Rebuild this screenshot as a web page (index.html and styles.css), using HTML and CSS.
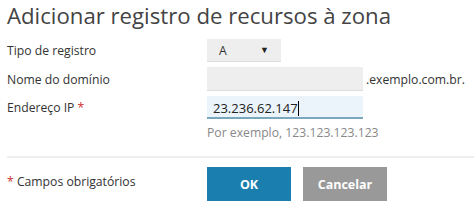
FILE: index.html
```html
<!DOCTYPE html>
<html lang="pt-BR">
<head>
    <meta charset="UTF-8">
    <title>Adicionar registro de recursos</title>
    <link rel="stylesheet" href="styles.css">
</head>
<body>
    <h1>Adicionar registro de recursos à zona</h1>
    <div class="form">
        <div class="row">
            <label class="label">Tipo de registro</label>
            <div class="select">A <span class="caret">▼</span></div>
        </div>
        <div class="row">
            <label class="label">Nome do domínio</label>
            <div class="field">
                <div class="input"></div>
                <span class="suffix">.exemplo.com.br.</span>
            </div>
        </div>
        <div class="row">
            <label class="label">Endereço IP <span class="req">*</span></label>
            <div class="input focus">23.236.62.147<span class="cursor"></span></div>
        </div>
        <div class="hint">Por exemplo, 123.123.123.123</div>
    </div>
    <div class="footer">
        <div class="label"><span class="req">*</span> Campos obrigatórios</div>
        <div class="buttons">
            <button class="btn primary">OK</button>
            <button class="btn">Cancelar</button>
        </div>
    </div>
</body>
</html>
```
FILE: styles.css
```css
body {
    margin: 0;
    padding: 0 0 0 7px;
    font-family: 'Open Sans', sans-serif;
    font-size: 12.2px;
    color: #333;
    background: #fff;
}

h1 {
    font-size: 22.2px;
    font-weight: normal;
    color: #444;
    margin: 0;
    padding-top: 1px;
    line-height: 30px;
}

.form {
    margin-top: 8px;
}

.row {
    display: flex;
    align-items: center;
    margin-bottom: 5px;
}

.label {
    width: 200px;
}

.req {
    color: #d0332f;
}

.select {
    width: 74px;
    height: 23px;
    box-sizing: border-box;
    background: #eee;
    border-bottom: 1px solid #ddd;
    padding: 3px 0 0 12px;
    position: relative;
}

.caret {
    position: absolute;
    right: 12px;
    top: 4px;
    font-size: 9px;
    color: #222;
}

.field {
    display: flex;
    align-items: center;
}

.input {
    width: 156px;
    height: 24px;
    box-sizing: border-box;
    background: #eee;
    border-bottom: 1px solid #ddd;
    padding: 3px 6px 0;
}

.input.focus {
    height: 23px;
    background: #eaf4fa;
    border-bottom: 2px solid #7aa6be;
    color: #222;
    font-size: 13px;
}

.cursor {
    display: inline-block;
    width: 1px;
    height: 15px;
    background: #000;
    vertical-align: -3px;
}

.suffix {
    margin-left: 3px;
}

.hint {
    margin-left: 200px;
    color: #888;
    margin-top: 3px;
}

.footer {
    border-top: 2px solid #eee;
    margin-top: 15px;
    padding-top: 9px;
    display: flex;
}

.footer .label {
    padding-top: 6px;
}

.buttons {
    display: flex;
    gap: 12px;
}

.btn {
    width: 84px;
    height: 34px;
    border: none;
    background: #999;
    color: #fff;
    font-family: 'Open Sans', sans-serif;
    font-size: 12.5px;
    font-weight: bold;
    cursor: pointer;
}

.btn.primary {
    background: #1a7fae;
}
```
